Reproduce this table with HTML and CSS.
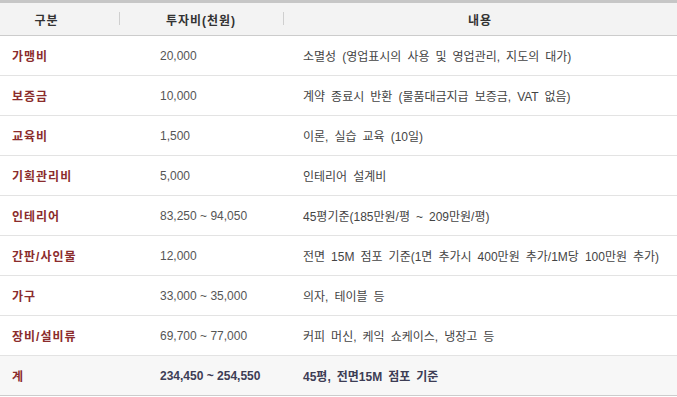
FILE: index.html
```html
<!DOCTYPE html>
<html lang="ko">
<head>
<meta charset="utf-8">
<title>투자비</title>
<link rel="stylesheet" href="styles.css">
</head>
<body>
<div class="cost-table">
  <div class="head">
    <div class="th th-cat">구분</div>
    <div class="th th-cost">투자비(천원)</div>
    <div class="th th-desc">내용</div>
  </div>
  <div class="row"><div class="cat">가맹비</div><div class="num">20,000</div><div class="desc">소멸성 (영업표시의 사용 및 영업관리, 지도의 대가)</div></div>
  <div class="row"><div class="cat">보증금</div><div class="num">10,000</div><div class="desc">계약 종료시 반환 (물품대금지급 보증금, VAT 없음)</div></div>
  <div class="row"><div class="cat">교육비</div><div class="num">1,500</div><div class="desc">이론, 실습 교육 (10일)</div></div>
  <div class="row"><div class="cat">기획관리비</div><div class="num">5,000</div><div class="desc">인테리어 설계비</div></div>
  <div class="row"><div class="cat">인테리어</div><div class="num">83,250 ~ 94,050</div><div class="desc">45평기준(185만원/평 ~ 209만원/평)</div></div>
  <div class="row"><div class="cat">간판/사인물</div><div class="num">12,000</div><div class="desc">전면 15M 점포 기준(1면 추가시 400만원 추가/1M당 100만원 추가)</div></div>
  <div class="row"><div class="cat">가구</div><div class="num">33,000 ~ 35,000</div><div class="desc">의자, 테이블 등</div></div>
  <div class="row"><div class="cat">장비/설비류</div><div class="num">69,700 ~ 77,000</div><div class="desc">커피 머신, 케익 쇼케이스, 냉장고 등</div></div>
  <div class="row total"><div class="cat">계</div><div class="num">234,450 ~ 254,550</div><div class="desc">45평, 전면15M 점포 기준</div></div>
</div>
</body>
</html>
```
FILE: styles.css
```css
html, body {
  margin: 0;
  padding: 0;
  background: #ffffff;
}
body {
  font-family: "Liberation Sans", "Noto Sans CJK KR", sans-serif;
  font-size: 12px;
  color: #555555;
}
.cost-table {
  width: 677px;
  border-top: 3px solid #c6c6c6;
}
.head {
  display: grid;
  grid-template-columns: 119px 164px 1fr;
  height: 32px;
  background: #f3f3f3;
  border-bottom: 1px solid #cccccc;
}
.th {
  position: relative;
  display: flex;
  align-items: center;
  justify-content: center;
  font-weight: bold;
  color: #333333;
  letter-spacing: 1px;
}
.th-cat {
  padding-right: 26px;
}
.th-cost::before,
.th-desc::before {
  content: "";
  position: absolute;
  left: 0;
  top: 9px;
  width: 1px;
  height: 13px;
  background: #cfcfcf;
}
.row {
  display: grid;
  grid-template-columns: 148px 143px 1fr;
  height: 39px;
  border-bottom: 1px solid #e3e3e3;
  align-items: center;
}
.row > div {
  padding-left: 12px;
  white-space: nowrap;
}
.cat {
  color: #8b2c2c;
  font-weight: bold;
  letter-spacing: 1px;
}
.num {
  color: #555555;
}
.desc {
  color: #444444;
  word-spacing: 2.7px;
}
.total {
  background: #f7f7f7;
  border-bottom: 1px solid #cccccc;
}
.total .num,
.total .desc {
  font-weight: bold;
  color: #3d3d55;
}
```
